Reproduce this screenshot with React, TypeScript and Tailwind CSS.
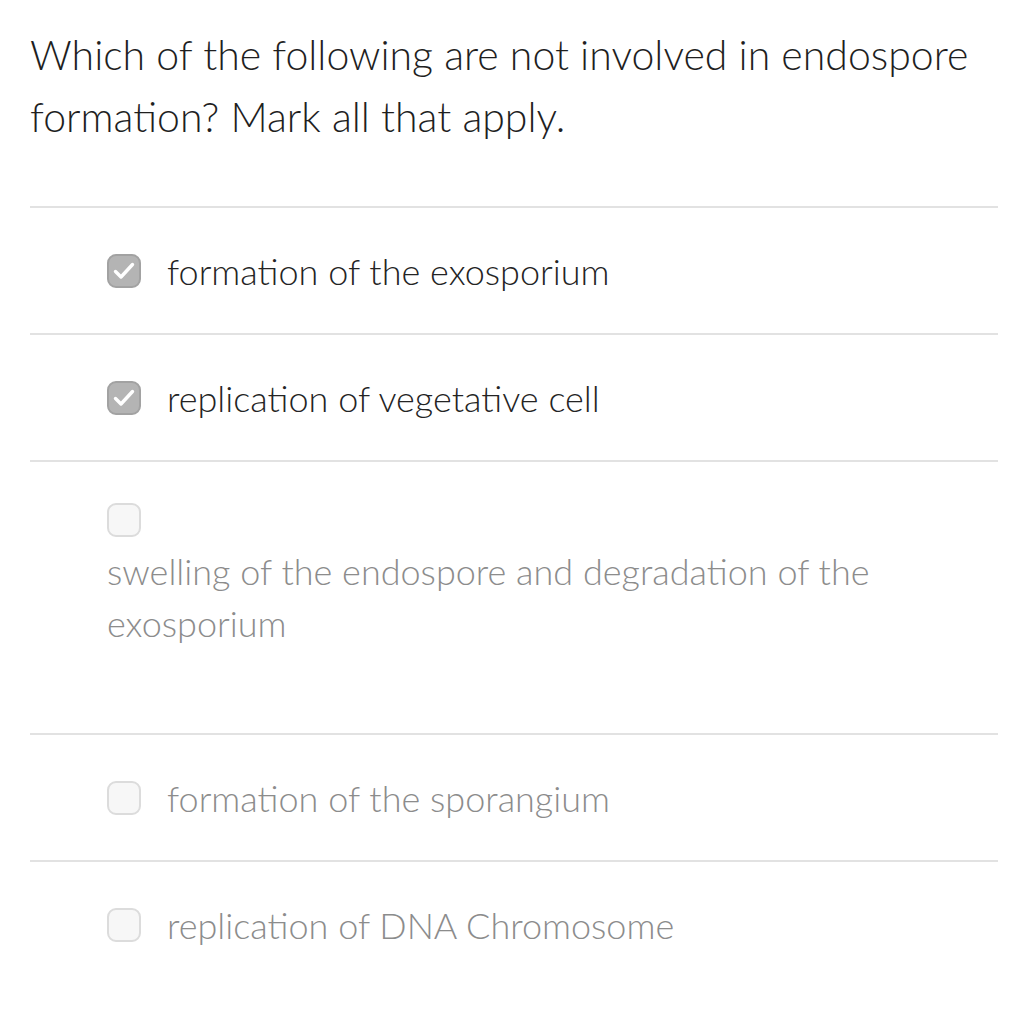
import React from "react";

const Box = ({ checked }: { checked: boolean }) =>
  checked ? (
    <div className="w-[34px] h-[34px] rounded-[9px] bg-[#b4b4b4] border-2 border-[#a2a2a2] flex items-center justify-center shrink-0">
      <svg width="24" height="20" viewBox="0 0 24 20" fill="none">
        <path d="M3.5 10.5 L9 16 L20.5 3.5" stroke="#ffffff" strokeWidth="3.4" strokeLinecap="round" strokeLinejoin="round" />
      </svg>
    </div>
  ) : (
    <div className="w-[34px] h-[34px] rounded-[9px] bg-[#f7f7f7] border-2 border-[#dcdcdc] shrink-0" />
  );

const Row = ({ checked, text }: { checked: boolean; text: string }) => (
  <div className="border-t-2 border-[#e2e2e2] h-[127px] flex items-center pl-[77px]">
    <Box checked={checked} />
    <span className={`ml-[26px] text-[36px] font-light ${checked ? "text-[#242424]" : "text-[#8c8c8c]"}`}>{text}</span>
  </div>
);

export default function App() {
  return (
    <div className="bg-white w-[1011px] h-[1024px] overflow-hidden" style={{ fontFamily: "Lato, 'Open Sans', sans-serif" }}>
      <h1 className="pt-[24px] pl-[30px] pr-[20px] text-[41px] leading-[62px] text-[#1f1f1f] font-light">
        Which of the following are not involved in endospore formation? Mark all that apply.
      </h1>
      <div className="mt-[58px] ml-[30px] mr-[13px]">
        <Row checked={true} text="formation of the exosporium" />
        <Row checked={true} text="replication of vegetative cell" />
        <div className="border-t-2 border-[#e2e2e2] h-[273px] pl-[77px] pt-[41px]">
          <Box checked={false} />
          <div className="mt-[8px] text-[36px] font-light leading-[52px] text-[#8c8c8c] pr-[60px]">
            swelling of the endospore and degradation of the exosporium
          </div>
        </div>
        <Row checked={false} text="formation of the sporangium" />
        <Row checked={false} text="replication of DNA Chromosome" />
      </div>
    </div>
  );
}
